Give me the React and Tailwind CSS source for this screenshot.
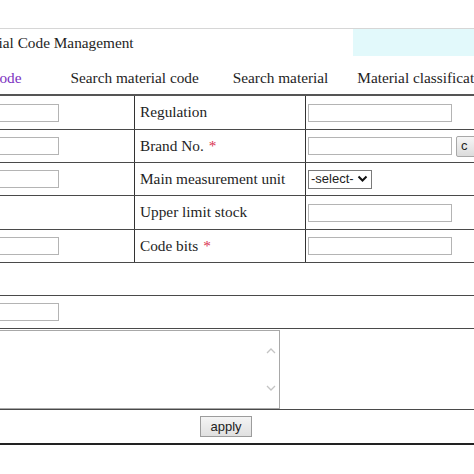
import React from "react";

const serif = "font-['Liberation_Serif',serif]";
const sans = "font-['Liberation_Sans',Arial,sans-serif]";

function Input({ className = "" }) {
  return (
    <div className={`h-[18px] shrink-0 border border-[#b4b4b4] bg-white ${className}`} />
  );
}

function Star() {
  return <span className="ml-[5px] text-[#d9304f]">*</span>;
}

function Row({ left = true, label, right, h = "h-[33px]" }) {
  return (
    <div className={`flex ${h} border-b border-[#4a4a4a]`}>
      <div className="flex w-[135px] shrink-0 items-center overflow-hidden border-r border-[#333]">
        {left && <Input className="-ml-[85px] w-[144px]" />}
      </div>
      <div className="flex w-[171px] shrink-0 items-center border-r border-[#333] pl-[5px] text-[15.3px] text-[#1e1e1e]">
        {label}
      </div>
      <div className="flex min-w-0 flex-1 items-center pl-[1px]">{right}</div>
    </div>
  );
}

export default function App() {
  return (
    <div className={`relative h-[474px] w-[474px] overflow-hidden bg-white ${serif}`}>
      <div className="h-[28px]" />
      <div className="flex h-[28px] border-t border-[#d6d6d6]">
        <div className="flex flex-1 items-center overflow-hidden pt-[1px]">
          <span className="-ml-[38px] whitespace-nowrap text-[15.3px] text-[#1e1e1e]">
            Material Code Management
          </span>
        </div>
        <div className="w-[121px] bg-[#e2f9fb]" />
      </div>
      <div className="flex h-[38px] items-center whitespace-nowrap pt-[6px] text-[15.3px] text-[#1e1e1e]">
        <span className="-ml-[63px] text-[#7b2fc0]">Material code</span>
        <span className="ml-[49px]">Search material code</span>
        <span className="ml-[34px]">Search material</span>
        <span className="ml-[29px]">Material classification</span>
      </div>
      <div className="border-t-2 border-[#555]">
        <Row
          h="h-[34px]"
          label="Regulation"
          right={<Input className="ml-[1px] w-[144px]" />}
        />
        <Row
          label={
            <>
              Brand No.<Star />
            </>
          }
          right={
            <>
              <Input className="ml-[1px] w-[144px]" />
              <div
                className={`ml-[4px] flex h-[21px] w-[40px] shrink-0 items-center rounded-[2px] border border-[#a8a8a8] bg-gradient-to-b from-[#f6f6f6] to-[#dcdcdc] pl-[4px] text-[13px] text-[#222] ${sans}`}
              >
                c
              </div>
            </>
          }
        />
        <Row
          label="Main measurement unit"
          right={
            <div
              className={`ml-[1px] flex h-[19px] w-[64px] items-center justify-between border border-[#7a7a7a] bg-white pl-[2px] pr-[3px] text-[13px] text-[#222] ${sans}`}
            >
              <span>-select-</span>
              <svg width="11" height="8" viewBox="0 0 11 8">
                <path d="M1.5 1.5 L5.5 5.5 L9.5 1.5" fill="none" stroke="#111" strokeWidth="2" />
              </svg>
            </div>
          }
        />
        <Row
          h="h-[34px]"
          left={false}
          label="Upper limit stock"
          right={<Input className="ml-[1px] w-[144px]" />}
        />
        <Row
          label={
            <>
              Code bits<Star />
            </>
          }
          right={<Input className="ml-[1px] w-[144px]" />}
        />
        <div className="h-[33px] border-b border-[#4a4a4a]" />
        <div className="flex h-[33px] items-center border-b border-[#4a4a4a]">
          <Input className="-ml-[85px] w-[144px]" />
        </div>
        <div className="h-[81px] border-b border-[#4a4a4a] pt-[1px]">
          <div className="-ml-[4px] flex h-[79px] w-[284px] justify-end border border-[#a8a8a8] bg-white">
            <div className="flex w-[14px] flex-col items-center justify-between pb-[17px] pt-[17px] pr-[2px]">
              <svg width="10" height="6" viewBox="0 0 10 6">
                <path d="M1 5 L5 1 L9 5" fill="none" stroke="#c4c4c4" strokeWidth="1.3" />
              </svg>
              <svg width="10" height="6" viewBox="0 0 10 6">
                <path d="M1 1 L5 5 L9 1" fill="none" stroke="#c4c4c4" strokeWidth="1.3" />
              </svg>
            </div>
          </div>
        </div>
        <div className="flex h-[35px] items-center border-b-2 border-[#222]">
          <div
            className={`ml-[200px] flex h-[21px] w-[52px] items-center justify-center border border-[#9c9c9c] bg-gradient-to-b from-[#f4f4f4] to-[#e0e0e0] text-[13px] text-[#222] ${sans}`}
          >
            apply
          </div>
        </div>
      </div>
    </div>
  );
}
